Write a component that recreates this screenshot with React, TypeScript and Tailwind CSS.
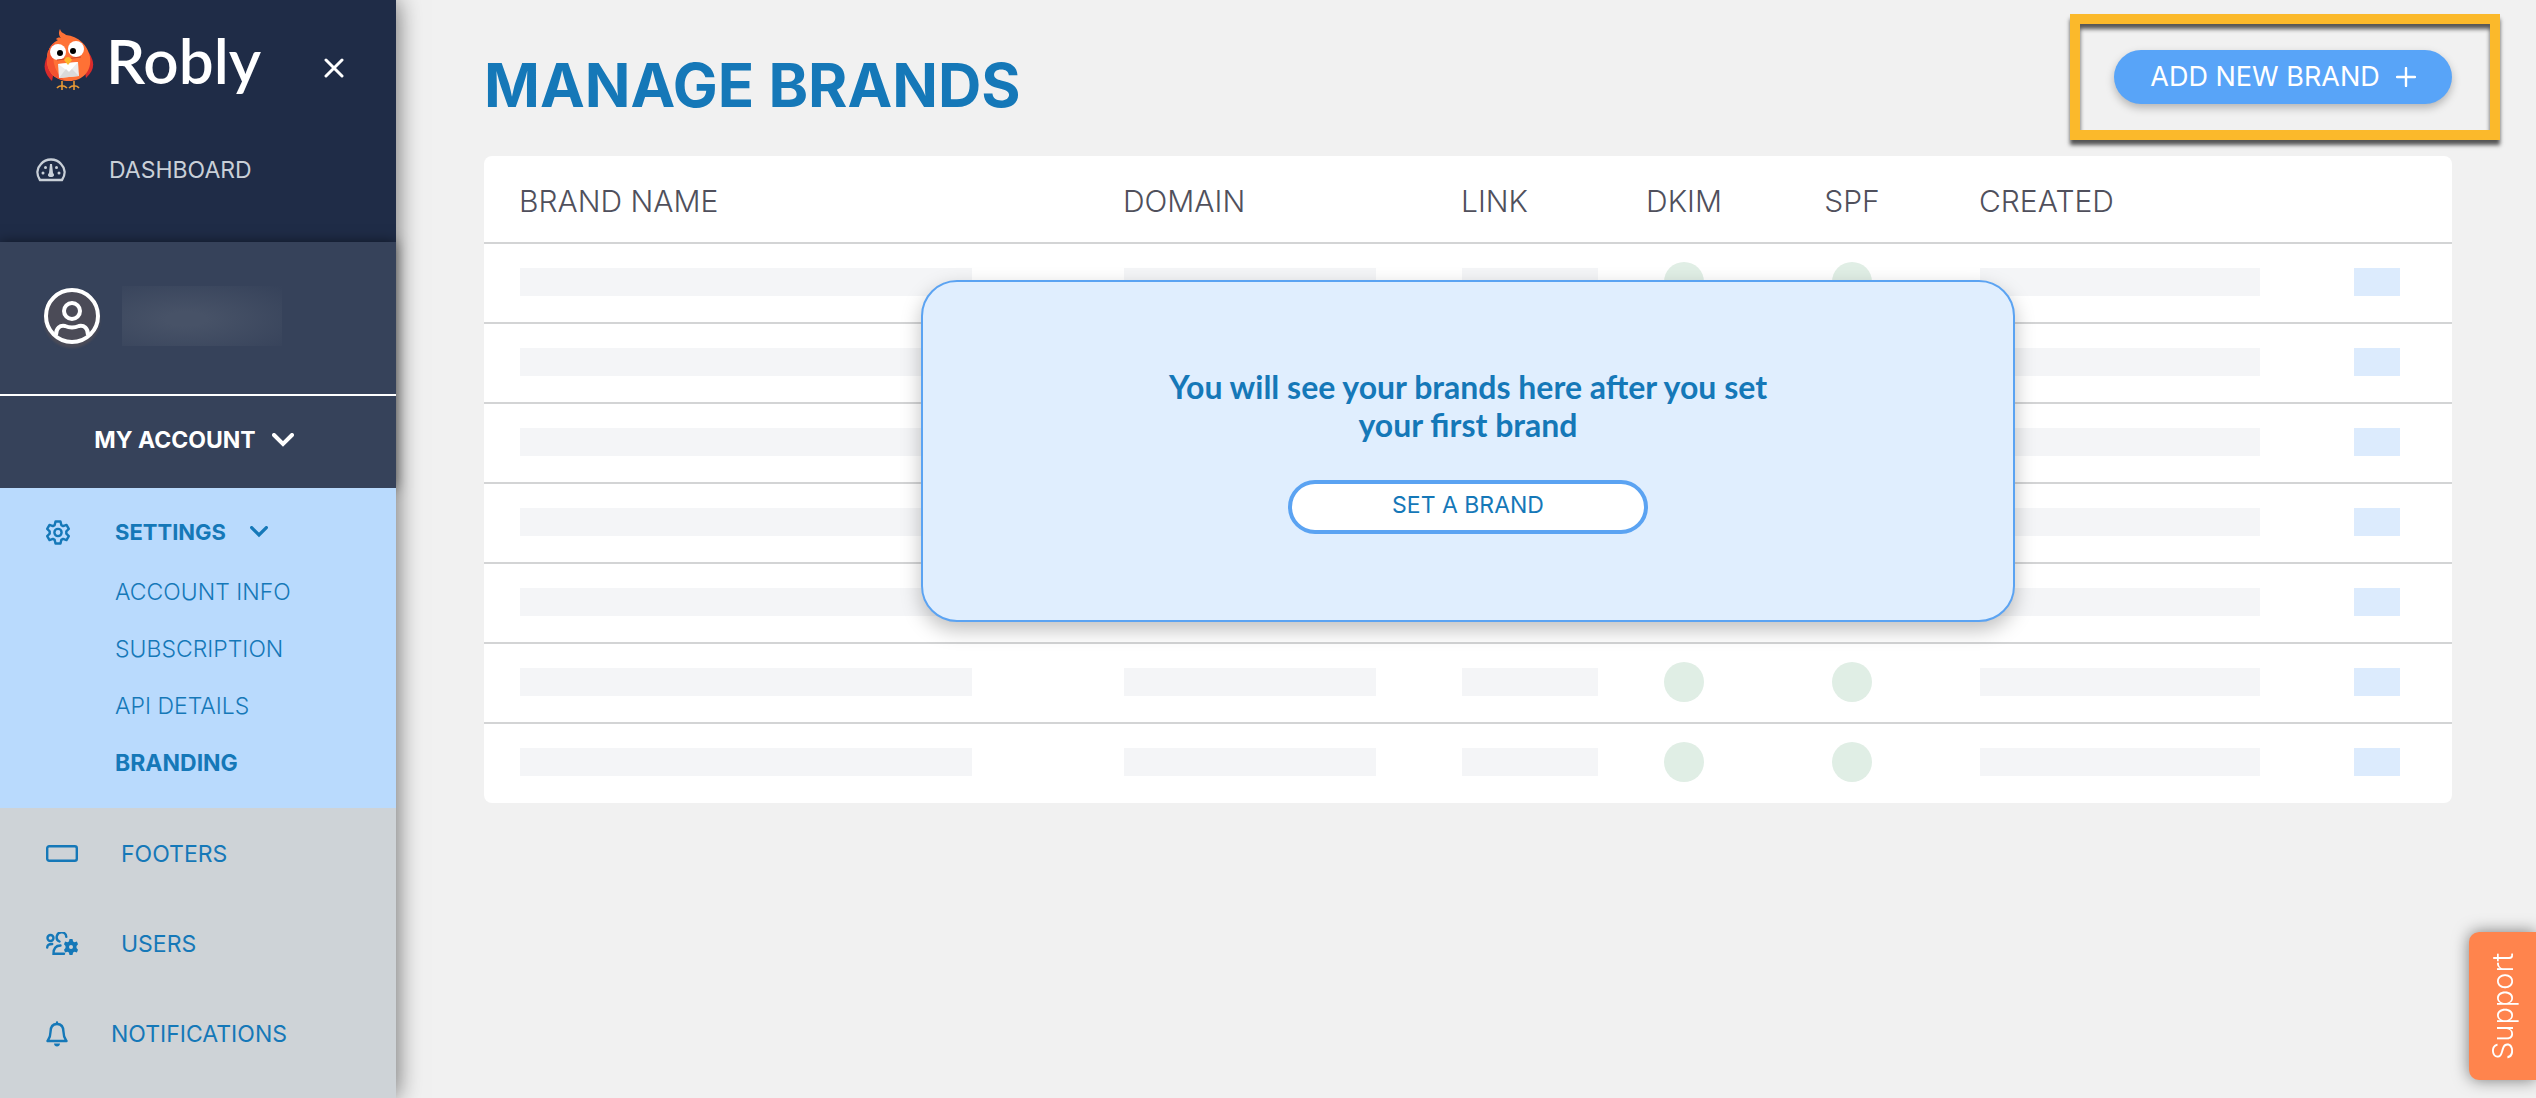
import React, { useState } from "react";

const fontText = "font-[Inter,'Liberation_Sans',sans-serif]";

const RoblyBird = () => (
  <svg width="50" height="62" viewBox="0 0 50 62" aria-hidden="true">
    <path d="M4 26C-1 35-1 43 8 52L12 32Z" fill="#d92b2b" />
    <path d="M45 24C51 33 51 41 42 49L39 32Z" fill="#d92b2b" />
    <path
      d="M17 9C14 6 15 2 16 0c1 4 4 4 6 6 12 1 22 10 24 22 2 14-7 24-21 24C12 52 3 44 3 31c0-3 0-6 1-9l1-1v-1c2-4 5-7 9-9-1 0-2-1-2-1 1-1 3-2 5-1Z"
      fill="#ff7135"
    />
    <path d="M3 31c0-8 3-14 8-18-4 14-2 29 9 38C10 50 3 42 3 31Z" fill="#f4522f" />
    <circle cx="14" cy="23" r="8" fill="#fff" />
    <circle cx="32" cy="20" r="8" fill="#fff" />
    <circle cx="16" cy="24" r="3" fill="#000" />
    <circle cx="29" cy="22" r="3" fill="#000" />
    <path d="m13 31 24-3" stroke="#c8452a" strokeWidth="1" />
    <path d="m14 35 20-2 1 14-20 2Z" fill="#ececec" />
    <path d="m14 35 11 8 9-10Z" fill="#fff" />
    <path d="m15 49 7-9 3 3 3-3 7 7Z" fill="#dadada" />
    <path d="M20 31c2-4 6-4 8 0l-4 5Z" fill="#fbb92b" />
    <path
      d="M18 52v9m-5-2c2-3 7-3 10 0M30 52v9m-5-2c3-3 8-3 10 0"
      fill="none"
      stroke="#e99a35"
      strokeWidth="1.6"
    />
  </svg>
);

const CloseIcon = () => (
  <svg width="20" height="20" viewBox="0 0 20 20" aria-hidden="true">
    <path d="m2 2 16 16M18 2 2 18" stroke="#fff" strokeWidth="3" strokeLinecap="round" />
  </svg>
);

const GaugeIcon = () => (
  <svg width="30" height="24" viewBox="0 0 30 24" aria-hidden="true">
    <path
      d="M4 22C0 16 1 10 5 6c5-6 15-6 20 0 4 4 5 10 1 16Z"
      fill="none"
      stroke="currentColor"
      strokeWidth="2.4"
      strokeLinejoin="round"
    />
    <path d="M14 6h2l1 9c2 2 1 4-2 4s-4-2-2-4Z" fill="currentColor" />
    <circle cx="9.500" cy="9.500" r="1.500" fill="currentColor" />
    <circle cx="20.500" cy="9.500" r="1.500" fill="currentColor" />
    <circle cx="7" cy="15" r="1.500" fill="currentColor" />
    <circle cx="23" cy="15" r="1.500" fill="currentColor" />
  </svg>
);

const AvatarIcon = () => (
  <svg
    className="drop-shadow-[0_4px_1px_#4b4b57]"
    width="56"
    height="56"
    viewBox="0 0 56 56"
    fill="none"
    stroke="#fff"
    strokeWidth="4"
    aria-hidden="true"
  >
    <circle cx="28" cy="28" r="26" fill="#4b4b57" />
    <circle cx="28" cy="23" r="8" />
    <path d="M12 47c0-7 4-10 9-9 5 2 9 2 14 0 5-1 9 2 9 9" />
  </svg>
);

const ChevronIcon = ({ className }: { className: string }) => (
  <svg className={className} viewBox="0 0 22 14" aria-hidden="true">
    <path
      d="m2 2 9 9 9-9"
      fill="none"
      stroke="currentColor"
      strokeWidth="4"
      strokeLinecap="round"
    />
  </svg>
);

const GearIcon = () => (
  <svg
    width="24"
    height="25"
    viewBox="0 0 24 25"
    fill="none"
    stroke="currentColor"
    strokeWidth="2.400"
    strokeLinejoin="round"
    aria-hidden="true"
  >
    <path d="M9.500 1.500h5l.8 3.600 1.800 1 3.400-1.200 2.300 4-2.500 2.400v2.400l2.500 2.400-2.300 4-3.400-1.200-1.800 1-.8 3.600h-5l-.8-3.600-1.800-1-3.400 1.200-2.300-4 2.500-2.400v-2.400L1.200 8.900l2.300-4 3.400 1.200 1.800-1Z" />
    <circle cx="12" cy="12.500" r="3.600" />
  </svg>
);

const FooterIcon = () => (
  <svg width="32" height="18" viewBox="0 0 32 18" aria-hidden="true">
    <rect
      x="1.200"
      y="1.200"
      width="29.600"
      height="14.600"
      rx="2"
      fill="none"
      stroke="currentColor"
      strokeWidth="2.400"
    />
  </svg>
);

const UsersIcon = () => (
  <svg
    width="32"
    height="24"
    viewBox="0 0 32 24"
    fill="none"
    stroke="currentColor"
    strokeWidth="2.400"
    strokeLinecap="round"
    aria-hidden="true"
  >
    <circle cx="4.500" cy="6" r="3" />
    <path d="M1.200 15.500c0-2.500 1.800-3.500 5-3.500" />
    <path d="M13.500 9.500a4.800 4.800 0 1 1 6.800-4.600" />
    <path d="M14.500 13.500c-5 0-7 3-7 8.300H18" />
    <path
      d="M23.500 7h3l.6 2.400 1.500.9 2.300-.8 1.100 2.800-1.500 1.700v2l1.500 1.700-1.100 2.800-2.300-.8-1.500.9-.6 2.400h-3l-.6-2.400-1.500-.9-2.300.8-1.100-2.800 1.500-1.700v-2L18 12.300l1.100-2.800 2.300.8 1.500-.9Z"
      fill="currentColor"
      stroke="none"
    />
    <circle cx="25" cy="15" r="2" fill="#ced3d7" stroke="none" />
  </svg>
);

const BellIcon = () => (
  <svg width="22" height="26" viewBox="0 0 22 26" aria-hidden="true">
    <path
      d="M11 3c-5 0-6.500 4-6.500 8 0 5-1 6-3 9h19c-2-3-3-4-3-9 0-4-1.500-8-6.500-8Zm0 0V1.500"
      fill="none"
      stroke="currentColor"
      strokeWidth="2.400"
      strokeLinejoin="round"
      strokeLinecap="round"
    />
    <path d="M8 22.500h6c0 4-6 4-6 0Z" fill="currentColor" />
  </svg>
);

const PlusIcon = () => (
  <svg width="20" height="20" viewBox="0 0 20 20" aria-hidden="true">
    <path d="M10 1v18M1 10h18" stroke="#fff" strokeWidth="2.400" strokeLinecap="round" />
  </svg>
);

const settingsLinks = ["Account info", "Subscription", "API details", "Branding"];

const Sidebar = () => {
  const [active, setActive] = useState("Branding");

  return (
    <aside className="relative z-10 flex w-[396px] shrink-0 flex-col bg-[#ced3d7] text-[23px] leading-7 uppercase shadow-[0_0_24px_rgba(0,0,0,0.6)]">
      <div className="h-[242px] bg-[#1f2c47]">
        <div className="flex items-center pt-6 pl-11">
          <RoblyBird />
          <span className="ml-3 font-[Lato,sans-serif] text-[62px] leading-[72px] font-semibold text-white normal-case">
            Robly
          </span>
          <button
            type="button"
            aria-label="Close menu"
            className="mt-4 mr-[52px] ml-auto cursor-pointer"
          >
            <CloseIcon />
          </button>
        </div>
        <a href="#dashboard" className="mt-15 flex items-center pl-9 text-[#c9d0d8]">
          <span className="w-[73px]">
            <GaugeIcon />
          </span>
          Dashboard
        </a>
      </div>

      <div className="bg-[#36425a] text-white shadow-[0_0_12px_rgba(0,0,0,0.5)]">
        <div className="flex h-[154px] items-center gap-[22px] border-b-2 border-white pb-1 pl-11">
          <AvatarIcon />
          <div className="h-[60px] w-40 bg-[radial-gradient(ellipse_at_40%_55%,#475267_15%,#36425a_100%)]" />
        </div>
        <button
          type="button"
          className="flex h-[92px] w-full cursor-pointer items-center justify-center gap-4 pr-2 pb-1 font-bold uppercase"
        >
          My account
          <ChevronIcon className="w-[22px]" />
        </button>
      </div>

      <nav className="relative h-[320px] bg-[#b9dafd] pt-[30px] text-[#1578b8]">
        <button
          type="button"
          className="flex cursor-pointer items-center pl-[46px] text-[22px] font-bold uppercase"
        >
          <span className="w-[69px]">
            <GearIcon />
          </span>
          Settings
          <ChevronIcon className="ml-6 w-[18px]" />
        </button>
        <ul className="mt-8 flex flex-col gap-[29px] pl-[115px]">
          {settingsLinks.map((link) => (
            <li key={link}>
              <a
                href="#settings"
                className={active === link ? "font-bold" : "font-light"}
                onClick={() => setActive(link)}
              >
                {link}
              </a>
            </li>
          ))}
        </ul>
      </nav>

      <nav className="relative flex flex-1 flex-col gap-[62px] bg-[#ced3d7] pt-8 pl-[46px] text-[#1578b8]">
        <a href="#footers" className="flex items-center gap-[43px]">
          <FooterIcon />
          Footers
        </a>
        <a href="#users" className="flex items-center gap-[43px]">
          <UsersIcon />
          Users
        </a>
        <a href="#notifications" className="flex items-center gap-[43px]">
          <BellIcon />
          Notifications
        </a>
      </nav>
    </aside>
  );
};

const Bar = ({ className }: { className: string }) => (
  <div className={`h-7 bg-[#f4f5f7] ${className}`} />
);

const Dot = () => <div className="mx-auto size-10 rounded-full bg-[#e0eee5]" />;

const BrandsTable = () => (
  <div className="overflow-hidden rounded-lg bg-white">
    <table className="w-full table-fixed text-left">
      <colgroup>
        <col className="w-[604px]" />
        <col className="w-[338px]" />
        <col className="w-[182px]" />
        <col className="w-[152px]" />
        <col className="w-[184px]" />
        <col className="w-[374px]" />
        <col className="w-[134px]" />
      </colgroup>
      <thead>
        <tr className="h-[87px] text-[30px] leading-8 text-[#50505c] uppercase [&>th]:pt-1 [&>th]:font-light">
          <th className="pl-[35px]">Brand name</th>
          <th className="pl-[35px]">Domain</th>
          <th className="pl-[35px]">Link</th>
          <th className="text-center">DKIM</th>
          <th className="text-center">SPF</th>
          <th className="pl-[35px]">Created</th>
          <th aria-label="Actions" />
        </tr>
      </thead>
      <tbody>
        {Array.from({ length: 7 }, (_, i) => (
          <tr key={i} className="h-20 border-t-2 border-[#d3d4d5] [&>td]:pb-[3px]">
            <td className="pl-9"><Bar className="max-w-[452px]" /></td>
            <td className="pl-9"><Bar className="max-w-[252px]" /></td>
            <td className="pl-9"><Bar className="max-w-[136px]" /></td>
            <td><Dot /></td>
            <td><Dot /></td>
            <td className="pl-9"><Bar className="max-w-[280px]" /></td>
            <td className="pl-9"><div className="h-7 w-[46px] bg-[#dcebfd]" /></td>
          </tr>
        ))}
      </tbody>
    </table>
  </div>
);

const EmptyState = () => (
  <div className="absolute inset-x-0 top-[124px] mx-auto flex h-[342px] w-[1094px] flex-col items-center rounded-[36px] border-2 border-[#5ba3f2] bg-[#e0eefe] pt-[86px] font-[Lato,sans-serif] text-[#1578b8] shadow-[0_8px_20px_rgba(0,0,0,0.25)]">
    <p className="w-[640px] text-center text-[32px] leading-[38px] font-bold">
      You will see your brands here after you set your first brand
    </p>
    <button
      type="button"
      className="mt-9 h-[54px] w-[360px] cursor-pointer rounded-full border-4 border-[#5ba3f2] bg-white pb-1 font-[Inter,'Liberation_Sans',sans-serif] text-[23px] leading-7 uppercase"
    >
      Set a brand
    </button>
  </div>
);

const App = () => {
  return (
    <div className={`flex min-h-screen bg-[#f1f1f1] ${fontText}`}>
      <Sidebar />
      <main className="flex-1 pr-[84px] pl-[88px]">
        <header className="flex h-[156px] items-start justify-between">
          <h1 className="pt-[50px] text-[60px] leading-[70px] font-bold text-[#1578b8] uppercase">
            Manage brands
          </h1>
          <div className="-mr-12 mt-[14px] border-10 border-[#fbb92b] py-[26px] pr-[38px] pl-[34px] shadow-[0_5px_4px_rgba(0,0,0,0.65),inset_0_5px_4px_rgba(0,0,0,0.65)]">
            <button
              type="button"
              className="flex h-[54px] w-[338px] cursor-pointer items-center justify-center gap-4 rounded-full bg-[#58a4f8] text-[27px] text-white uppercase shadow-[0_4px_8px_rgba(0,0,0,0.25)]"
            >
              Add new brand
              <PlusIcon />
            </button>
          </div>
        </header>
        <section className="relative">
          <BrandsTable />
          <EmptyState />
        </section>
      </main>
      <button
        type="button"
        className="fixed right-0 bottom-[18px] flex h-[148px] w-[67px] rotate-180 cursor-pointer items-center justify-center rounded-r-[10px] bg-[#ff844d] text-[29px] font-light text-white shadow-[0_0_16px_rgba(0,0,0,0.5)] [writing-mode:vertical-rl]"
      >
        Support
      </button>
    </div>
  );
};

export default App;
